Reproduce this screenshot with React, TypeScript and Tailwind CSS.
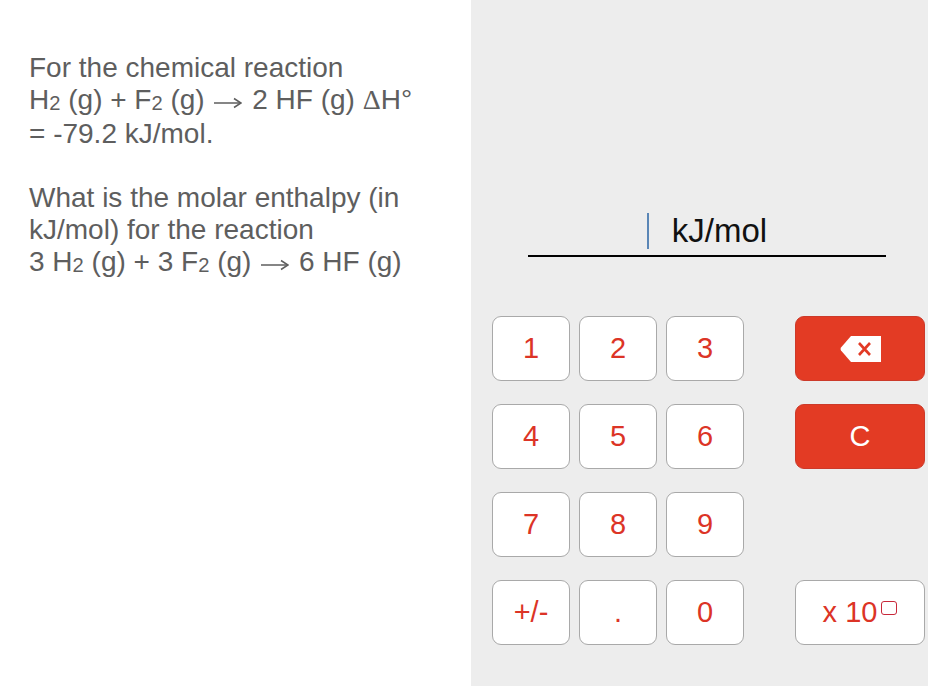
import React from 'react'

const sub = (t: string) => <span className="text-[0.72em] relative top-[1px]">{t}</span>
const arrow = (
  <svg width="28" height="12" viewBox="0 0 28 12" className="inline-block align-middle relative top-[1px] mx-[2px]">
    <path d="M0 6H26" stroke="#5e5e5e" strokeWidth="1.5" />
    <path d="M20 1.5L27 6L20 10.5" stroke="#5e5e5e" strokeWidth="1.5" fill="none" />
  </svg>
)
const delta = <span className="font-['Liberation_Serif','DejaVu_Serif',serif]">Δ</span>

const keys = ['1', '2', '3', '4', '5', '6', '7', '8', '9', '+/-', '.', '0']

function Key({ label }: { label: string }) {
  return (
    <button className="h-[65px] w-[78px] rounded-[9px] border border-[#a9a9a9] bg-white text-[29px] leading-none text-[#dc3426] flex items-center justify-center">
      {label}
    </button>
  )
}

function BackspaceIcon() {
  return (
    <svg width="41" height="26" viewBox="0 0 41 26">
      <path d="M11 0H41V26H11L1 14.6Q0 13 1 11.4Z" fill="#ffffff" />
      <path d="M19 7L30 19M30 7L19 19" stroke="#e23a25" strokeWidth="2.6" />
    </svg>
  )
}

export default function App() {
  return (
    <div className="w-[928px] h-[686px] flex font-['Liberation_Sans',Arial,sans-serif] overflow-hidden">
      {/* question */}
      <div className="w-[471px] shrink-0 bg-white pl-[29px] pt-[52px] text-[28px] leading-[32px] text-[#5e5e5e]">
        <p>
          <span className="block">For the chemical reaction</span>
          <span className="block">H{sub('2')} (g) + F{sub('2')} (g) {arrow} 2 HF (g) {delta}H°</span>
          <span className="block">= -79.2 kJ/mol.</span>
        </p>
        <p className="mt-[32px]">
          <span className="block">What is the molar enthalpy (in</span>
          <span className="block">kJ/mol) for the reaction</span>
          <span className="block">3 H{sub('2')} (g) + 3 F{sub('2')} (g) {arrow} 6 HF (g)</span>
        </p>
      </div>

      {/* answer panel */}
      <div className="flex-1 bg-[#ededed] flex flex-col">
        <div className="mt-[200px] ml-[57px] w-[358px] h-[57px] border-b-2 border-black flex items-center justify-center gap-[23px] pt-[6px]">
          <span className="w-[2px] h-[36px] bg-[#5a86b6]" />
          <span className="text-[33px] leading-none text-[#111]">kJ/mol</span>
        </div>

        <div className="mt-[59px] ml-[21px] flex">
          <div className="grid grid-cols-[repeat(3,78px)] gap-x-[9px] gap-y-[23px]">
            {keys.map(k => <Key key={k} label={k} />)}
          </div>
          <div className="ml-[51px] flex flex-col gap-y-[23px]">
            <button className="h-[65px] w-[130px] rounded-[9px] border border-[#cc3a2a] bg-[#e33b24] flex items-center justify-center">
              <BackspaceIcon />
            </button>
            <button className="h-[65px] w-[130px] rounded-[9px] border border-[#cc3a2a] bg-[#e33b24] text-[29px] leading-none text-white flex items-center justify-center">
              C
            </button>
            <div className="h-[65px]" />
            <button className="h-[65px] w-[130px] rounded-[9px] border border-[#a9a9a9] bg-white text-[29px] leading-none text-[#dc3426] flex items-center justify-center">
              x 10
              <span className="ml-[4px] mb-[10px] w-[16px] h-[14px] border-[1.5px] border-[#c8283a] rounded-[3px]" />
            </button>
          </div>
        </div>
      </div>
    </div>
  )
}
